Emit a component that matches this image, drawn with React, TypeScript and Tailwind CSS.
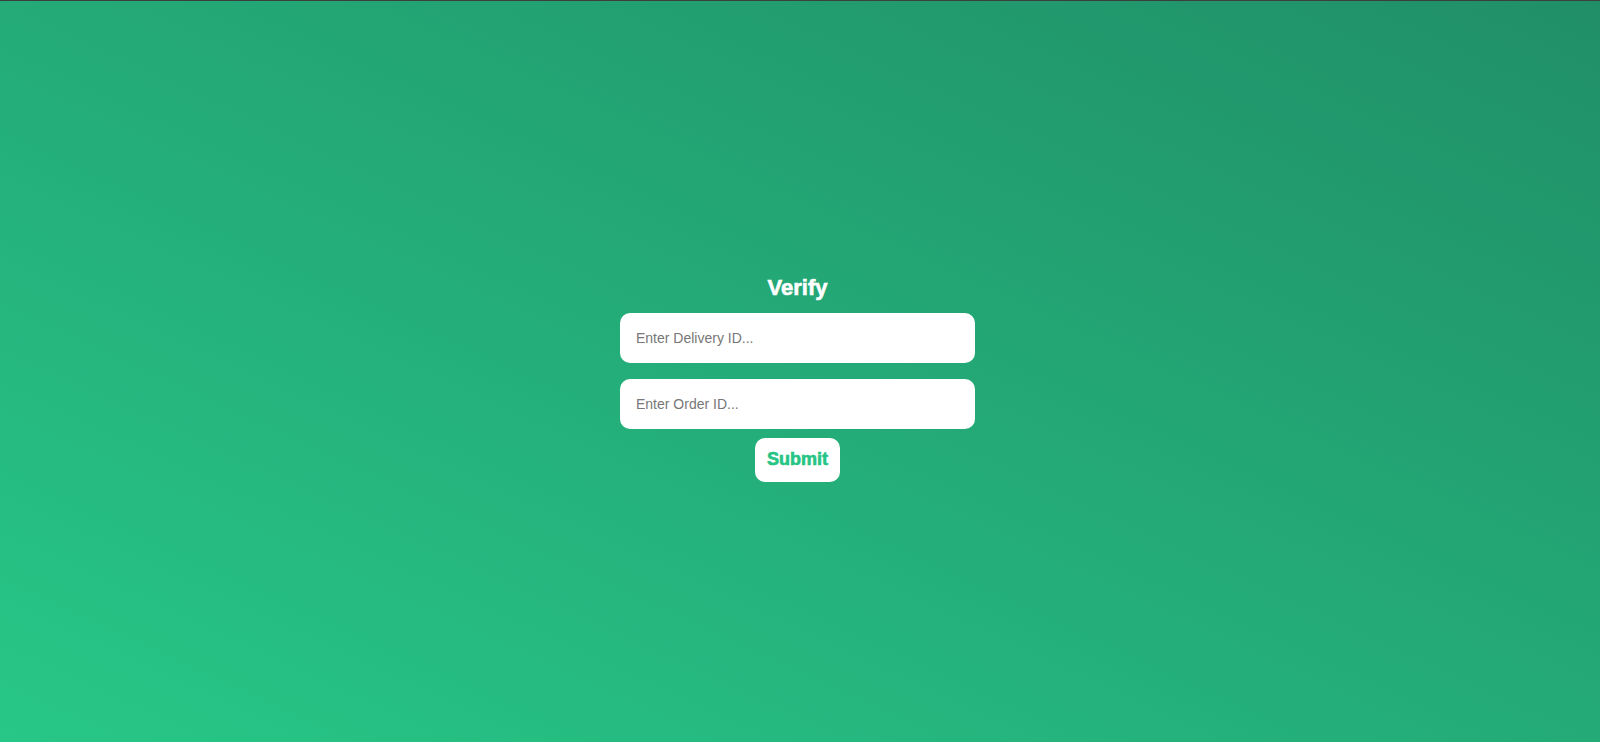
import React from "react";

export default function App() {
  return (
    <div
      className="w-[1600px] h-[742px] flex flex-col border-t border-[#3c3f3e] bg-gradient-to-tr from-[#27c787] to-[#208f68]"
      style={{ fontFamily: '"Liberation Sans", Arial, sans-serif' }}
    >
      <div className="flex-1 flex items-center justify-center pr-[5px] pt-[13px]">
        <form className="flex flex-col items-center" onSubmit={(e) => e.preventDefault()}>
          <h1 className="text-[22px] font-bold text-white leading-[25px] mb-[13px] [-webkit-text-stroke:0.6px_#ffffff]">
            Verify
          </h1>
          <input
            type="text"
            placeholder="Enter Delivery ID..."
            className="w-[355px] h-[50px] rounded-[10px] bg-white px-4 text-[14px] text-[#333] placeholder:text-[#777] outline-none"
          />
          <input
            type="text"
            placeholder="Enter Order ID..."
            className="w-[355px] h-[50px] rounded-[10px] bg-white px-4 mt-[16px] text-[14px] text-[#333] placeholder:text-[#777] outline-none"
          />
          <button
            type="submit"
            className="mt-[9px] w-[85px] h-[44px] rounded-[10px] bg-white text-[18px] font-bold text-[#26c485] [-webkit-text-stroke:0.6px_#26c485]"
          >
            Submit
          </button>
        </form>
      </div>
    </div>
  );
}
